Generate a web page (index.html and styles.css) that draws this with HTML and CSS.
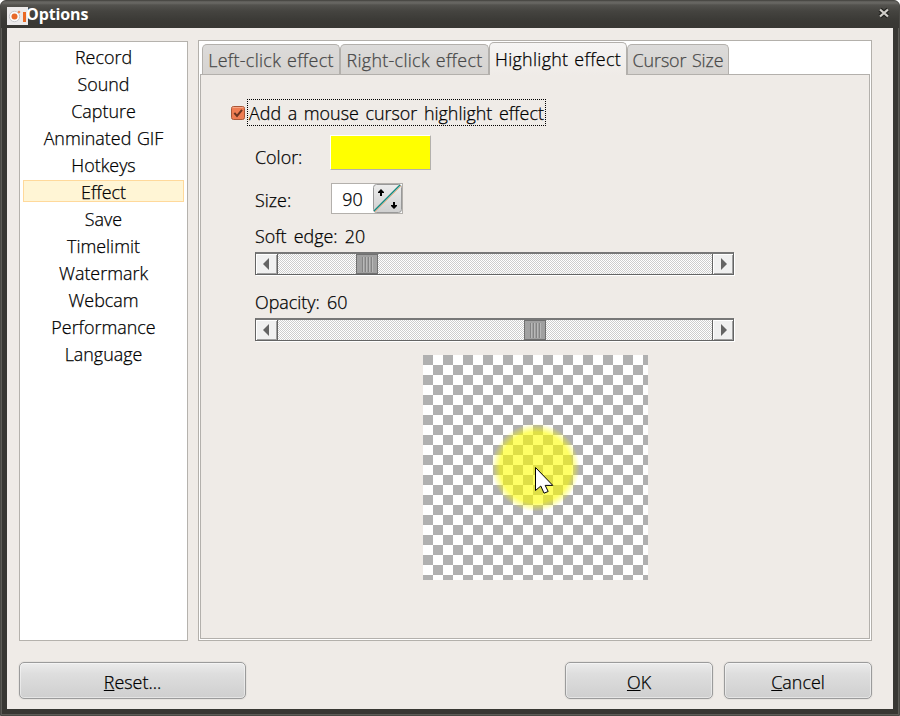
FILE: index.html
```html
<!DOCTYPE html>
<html lang="en">
<head>
    <meta charset="UTF-8">
    <title>Options</title>
    <link rel="stylesheet" href="styles.css">
</head>
<body>
    <div class="window">
        <!-- Title bar -->
        <div class="titlebar">
            <svg class="app-icon" width="21" height="18" viewBox="0 0 21 18">
                <rect width="21" height="18" fill="#eceaea"/>
                <circle cx="7.5" cy="9.5" r="5.2" fill="#fafafa" stroke="#c9c9cc"/>
                <circle cx="7.5" cy="9.5" r="3" fill="#e8692a"/>
                <circle cx="12" cy="5" r="1.3" fill="#ee8a55"/>
                <rect x="16" y="5" width="3" height="10" fill="#ea6a26"/>
            </svg>
            <span class="title">Options</span>
            <svg class="close" width="12" height="12" viewBox="0 0 12 12">
                <path d="M2 2.5L10 9.5M10 2.5L2 9.5" stroke="#22221f" stroke-width="4.5"/>
                <path d="M2 2.5L10 9.5M10 2.5L2 9.5" stroke="#d0cec9" stroke-width="2.3"/>
            </svg>
        </div>

        <div class="client">
            <div class="main">
                <!-- Categories -->
                <ul class="categories">
                    <li>Record</li>
                    <li>Sound</li>
                    <li>Capture</li>
                    <li>Anminated GIF</li>
                    <li>Hotkeys</li>
                    <li class="selected">Effect</li>
                    <li>Save</li>
                    <li>Timelimit</li>
                    <li>Watermark</li>
                    <li>Webcam</li>
                    <li>Performance</li>
                    <li>Language</li>
                </ul>

                <div class="page">
                    <div class="tabs">
                        <div class="tab tab-left"><span>Left-click effect</span></div>
                        <div class="tab tab-right"><span>Right-click effect</span></div>
                        <div class="tab tab-highlight active"><span>Highlight effect</span></div>
                        <div class="tab tab-cursor"><span>Cursor Size</span></div>
                    </div>

                    <!-- Highlight effect settings -->
                    <div class="panel">
                        <div class="check-row">
                            <svg class="checkbox" width="14" height="14" viewBox="0 0 14 14">
                                <rect x=".5" y=".5" width="13" height="13" rx="2" fill="#ef7d52" stroke="#a95636"/>
                                <path d="M1.5 1.5H12.5" stroke="#f7a585"/>
                                <path d="M3.3 6.8L6 10L11 3.8" fill="none" stroke="#6b3420" stroke-width="2"/>
                            </svg>
                            <span class="check-label"><span>Add a mouse cursor highlight effect</span></span>
                        </div>

                        <div class="field color-field">
                            <label>Color:</label>
                            <div class="swatch"></div>
                        </div>

                        <div class="field size-field">
                            <label>Size:</label>
                            <div class="spin">
                                <span class="spin-value">90</span>
                                <svg class="spin-button" width="29" height="29" viewBox="0 0 29 29">
                                    <defs>
                                        <linearGradient id="spinFill" x1="0" y1="0" x2="0" y2="1">
                                            <stop offset="0" stop-color="#ededed"/>
                                            <stop offset="1" stop-color="#cfcfcf"/>
                                        </linearGradient>
                                    </defs>
                                    <rect x=".5" y=".5" width="28" height="28" rx="3" fill="url(#spinFill)" stroke="#999"/>
                                    <path d="M2 28L28 2" stroke="#e9b58e"/>
                                    <path d="M1 27L27 1" stroke="#16877c" stroke-width="1.4"/>
                                    <path d="M8 5L11 8V9H9V12H7V9H5V8Z" fill="#000"/>
                                    <path d="M20 18H22V21H24V22L21 25L18 22V21H20Z" fill="#000"/>
                                </svg>
                            </div>
                        </div>

                        <div class="slider-label soft-label">Soft edge: 20</div>
                        <div class="slider">
                            <div class="arrow"><svg width="6" height="12" viewBox="0 0 6 12"><path d="M6 0V12L0 6Z" fill="#646464"/></svg></div>
                            <div class="track"><div class="thumb" style="margin-left: 78px"></div></div>
                            <div class="arrow arrow-right"><svg width="6" height="12" viewBox="0 0 6 12"><path d="M0 0V12L6 6Z" fill="#646464"/></svg></div>
                        </div>

                        <div class="slider-label opacity-label">Opacity: 60</div>
                        <div class="slider">
                            <div class="arrow"><svg width="6" height="12" viewBox="0 0 6 12"><path d="M6 0V12L0 6Z" fill="#646464"/></svg></div>
                            <div class="track"><div class="thumb" style="margin-left: 246px"></div></div>
                            <div class="arrow arrow-right"><svg width="6" height="12" viewBox="0 0 6 12"><path d="M0 0V12L6 6Z" fill="#646464"/></svg></div>
                        </div>

                        <!-- Preview -->
                        <div class="preview">
                            <div class="highlight"></div>
                            <svg class="cursor" width="19" height="28" viewBox="0 0 19 28">
                                <path d="M.5 .5V23.5L5.8 19L9 26.2L13.2 24.5L10.2 18.4H17.8Z" fill="#fff" stroke="#000"/>
                            </svg>
                        </div>
                    </div>
                </div>
            </div>

            <div class="buttons">
                <button class="reset"><u>R</u>eset...</button>
                <button class="ok"><u>O</u>K</button>
                <button class="cancel"><u>C</u>ancel</button>
            </div>
        </div>
    </div>
</body>
</html>
```
FILE: styles.css
```css
* { box-sizing: border-box; }
body { margin: 0; background: #fff; font-family: "Open Sans", "Noto Sans", sans-serif; font-size: 17.9px; font-weight: 300; line-height: 24px; color: #000; -webkit-text-stroke: 0.25px; }

.window { width: 900px; height: 716px; padding: 0 6px 6px; background: #383733; border: 1px solid #4a4945; border-radius: 6px 6px 0 0; overflow: hidden; box-shadow: inset 1px 1px 0 #5d5c57, inset -1px -1px 0 #5d5c57; }
.titlebar { display: flex; height: 27px; margin: 0 -6px; padding: 0 5px 0 6px; background: linear-gradient(#5c5b57 0, #6a6965 2px, #53524e 4px, #454440 10px, #3a3935 20px, #383733); }
.app-icon { margin-top: 6px; }
.title { margin: 1px 0 0 -2px; font-size: 16px; font-weight: bold; color: #fff; letter-spacing: -0.1px; -webkit-text-stroke: 0; }
.close { margin: 6px 4px 0 auto; }

.client { height: 681px; padding: 12px 21px 10px 12px; background: #efebe7; }
.main { display: flex; justify-content: space-between; height: 602px; }

.categories { width: 169px; height: 600px; margin: 1px 0 0; padding: 3px 3px 0; list-style: none; background: #fff; border: 1px solid #b5b2ad; text-align: center; word-spacing: 1px; }
.categories li { height: 22px; margin-bottom: 5px; border: 1px solid transparent; line-height: 22px; }
.categories .selected { background: #fff5d5; border-color: #ffd99b; }

.page { display: flex; flex-direction: column; width: 674px; height: 601px; padding: 1px; background: #fff; border: 1px solid #b3b0ab; }
.tabs { display: flex; align-items: flex-end; height: 32px; padding-left: 2px; }
.tab { height: 30px; padding-top: 3px; border: 1px solid #b3b0ac; border-bottom: none; border-radius: 5px 5px 0 0; background: linear-gradient(#dcdbda, #d6d3d0); color: #484848; letter-spacing: 0.3px; text-align: center; white-space: nowrap; word-spacing: 1px; }
.tab-left { width: 138px; }
.tab-right { width: 149px; }
.tab-highlight { width: 138px; }
.tab-cursor { width: 102px; letter-spacing: -0.1px; }
.tab.active { z-index: 1; height: 33px; margin-bottom: -1px; padding-top: 4px; background: linear-gradient(#f6f5f4, #efebe7); color: #000; }

.panel { flex: 1; padding: 24px 0 0 30px; border: 1px solid #b3b0ac; background: #efebe7; }
.check-row { display: flex; align-items: center; gap: 2px; height: 27px; }
.check-label { width: 299px; height: 27px; padding-left: 1px; border: 1px dotted #000; line-height: 27px; white-space: nowrap; word-spacing: 2px; }
.field { display: flex; padding-left: 24px; }
.field label { width: 75px; }
.color-field { margin-top: 9px; }
.color-field label { padding-top: 10px; }
.swatch { width: 101px; height: 35px; background: #ff0; border: 1px solid; border-color: #fff #b3b0ac #b3b0ac #fff; }
.size-field { margin-top: 13px; }
.size-field label { padding-top: 5px; }
.spin { display: flex; width: 72px; height: 31px; margin-left: 1px; background: #fff; border: 1px solid #b3b0ac; }
.spin-value { width: 41px; line-height: 31px; text-align: center; }

.slider-label { padding-left: 24px; word-spacing: 2.5px; }
.soft-label { margin-top: 10px; }
.opacity-label { margin-top: 15px; }
.slider { display: flex; width: 479px; height: 23px; margin: 4px 0 0 24px; border: 1px solid #646464; border-top: 2px solid #777; box-shadow: 1px 1px 0 #fff; }
.arrow { display: flex; align-items: center; width: 22px; padding-left: 7px; background: #f0f0f0; border-right: 1px solid #646464; box-shadow: inset 1px 1px 0 #fff, inset -1px -1px 0 #a0a0a0; }
.arrow-right { width: 21px; padding-left: 8px; border-right: none; border-left: 1px solid #646464; }
.track { flex: 1; background: repeating-conic-gradient(#fff 0 25%, #cdcdcd 0 50%) 0 0 / 2px 2px; }
.thumb { width: 22px; height: 20px; border: 1px solid #707070; background: repeating-linear-gradient(90deg, #848484 0 1px, #b8b8b8 1px 2px, #a0a0a0 2px 3px) 5px 2px / 12px 15px no-repeat #a0a0a0; }

.preview { position: relative; width: 225px; height: 225px; margin: 14px 0 0 192px; background: repeating-conic-gradient(#fff 0 25%, #b0b0b0 0 50%) 0 0 / 20px 20px; }
.highlight { position: absolute; left: 67px; top: 67px; width: 91px; height: 91px; background: radial-gradient(circle closest-side, rgba(255, 255, 0, .6) 78%, rgba(255, 255, 0, 0) 97%); }
.cursor { position: absolute; left: 112px; top: 112px; }

.buttons { display: flex; margin-top: 20px; }
button { height: 37px; padding: 2px 0 0; font: inherit; color: #000; background: linear-gradient(#ececec, #dedede 30%, #cfcfcf); border: 1px solid #9b9b9b; border-radius: 5px; box-shadow: inset 0 0 0 1px rgba(255, 255, 255, .45), 0 0 0 1px #e6e3df; }
.reset { width: 227px; }
.ok { width: 148px; margin-left: auto; }
.cancel { width: 148px; margin-left: 11px; }
```
